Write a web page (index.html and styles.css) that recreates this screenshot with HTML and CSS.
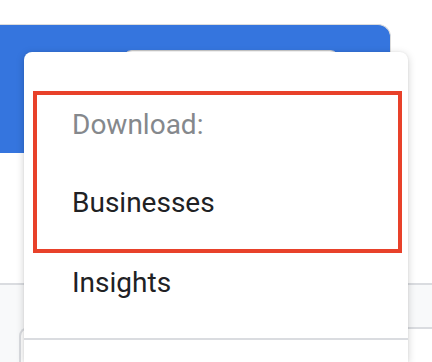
FILE: index.html
```html
<!DOCTYPE html>
<html lang="en">
<head>
    <meta charset="UTF-8">
    <meta name="viewport" content="width=device-width, initial-scale=1.0">
    <title>Download menu</title>
    <link rel="stylesheet" href="styles.css">
</head>
<body>
    <div class="page">
        <header class="app-header">
            <div class="search-box"></div>
        </header>
        <section class="content"></section>
        <section class="lower">
            <div class="card"></div>
        </section>
    </div>

    <div class="menu" role="menu">
        <div class="highlight">
            <div class="menu-label">Download:</div>
            <div class="menu-item first">Businesses</div>
        </div>
        <div class="menu-item">Insights</div>
        <div class="menu-divider"></div>
    </div>
</body>
</html>
```

FILE: styles.css
```css
:root {
    --blue: #3575de;
    --text: #202124;
    --muted: #85888c;
    --line: #dadce0;
    --mark: #e8412a;
}

* {
    margin: 0;
    padding: 0;
    box-sizing: border-box;
}

body {
    width: 432px;
    height: 362px;
    overflow: hidden;
    background: #ffffff;
    font-family: 'Roboto', 'Liberation Sans', sans-serif;
    color: var(--text);
    position: relative;
}

.page {
    padding-top: 24px;
}

.app-header {
    width: 391px;
    height: 129px;
    background: var(--blue);
    border-top: 1px solid #dcdcdc;
    border-right: 1px solid #dcdcdc;
    border-top-right-radius: 13px;
    padding: 25px 0 0 122px;
}

.search-box {
    width: 218px;
    height: 40px;
    background: #ffffff;
    border: 1px solid #c9c9c9;
    border-radius: 10px;
}

.content {
    height: 130px;
    background: #ffffff;
}

.lower {
    height: 79px;
    border-top: 2px solid var(--line);
    background: #f8f9fa;
    padding: 42px 0 0 19px;
}

.card {
    height: 35px;
    background: #ffffff;
    border: 2px solid var(--line);
    border-right: none;
    border-bottom: none;
    border-top-left-radius: 9px;
}

/* dropdown over the page */
.menu {
    position: absolute;
    left: 24px;
    top: 52px;
    width: 384px;
    height: 310px;
    background: #ffffff;
    border-radius: 8px 8px 0 0;
    box-shadow: 0 2px 8px rgba(0, 0, 0, 0.18), 0 0 2px rgba(0, 0, 0, 0.08);
    padding-top: 39px;
}

.highlight {
    margin: 0 6px 0 9px;
    border: 4px solid var(--mark);
}

.menu-label,
.menu-item {
    font-size: 28px;
    line-height: 32px;
    padding-left: 35px;
}

.menu-label {
    color: var(--muted);
    padding-top: 14px;
    padding-bottom: 16px;
}

.menu-item {
    padding-left: 48px;
    padding-top: 14px;
    padding-bottom: 39px;
}

.menu-item.first {
    padding-left: 35px;
    padding-top: 30px;
    padding-bottom: 30px;
}

.menu-divider {
    height: 2px;
    background: var(--line);
}
```
